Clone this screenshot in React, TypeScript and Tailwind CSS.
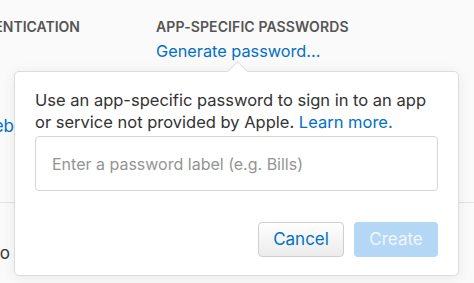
import React from "react";

export default function App() {
  return (
    <div
      className="relative w-[474px] h-[283px] overflow-hidden bg-[#fafafa]"
      style={{ fontFamily: "Inter, 'Noto Sans', sans-serif" }}
    >
      {/* background page */}
      <div className="flex flex-col">
        <div className="flex pt-[18px]">
          <div className="w-[156px]">
            <div className="w-[80px] flex justify-end whitespace-nowrap text-[14px] font-semibold text-[#555] leading-[18px]">
              TWO-FACTOR AUTHENTICATION
            </div>
          </div>
          <div className="flex flex-col">
            <div className="text-[14px] font-semibold text-[#555] leading-[18px] tracking-[0.1px]">
              APP-SPECIFIC PASSWORDS
            </div>
            <div className="mt-[4px] text-[16.3px] text-[#0070c9] leading-[22px]">
              Generate password...
            </div>
          </div>
        </div>
        <div className="mt-[53px] w-[14px] flex justify-end whitespace-nowrap text-[17px] text-[#0070c9] leading-[22px]">
          Web
        </div>
        <div className="mt-[65px] h-px bg-[#e3e3e3]" />
        <div className="mt-[39px] w-[10px] flex justify-end whitespace-nowrap text-[17px] text-[#333] leading-[22px]">
          Who
        </div>
      </div>

      {/* popover */}
      <div className="absolute left-[14px] top-[71px] w-[445px] h-[205px] bg-white border border-[#dcdcdc] rounded-[5px] shadow-[0_2px_14px_rgba(0,0,0,0.07)] px-[20px] pt-[17px]">
        {/* arrow */}
        <div className="absolute left-[215px] top-[-8px] w-[15px] h-[15px] bg-white border-l border-t border-[#dcdcdc] rotate-45" />
        <p className="relative text-[16.5px] leading-[22px] text-[#333]">
          Use an app-specific password to sign in to an app or service not provided by Apple.{" "}
          <span className="text-[#0070c9]">Learn more.</span>
        </p>
        <div className="mt-[3px] h-[55px] border border-[#d6d6d6] rounded-[4px] flex items-center px-[16px]">
          <span className="text-[16px] text-[#949494]">Enter a password label (e.g. Bills)</span>
        </div>
        <div className="mt-[31px] flex justify-end gap-[10px]">
          <div className="w-[86px] h-[35px] rounded-[4px] border border-[#cfcfcf] bg-gradient-to-b from-white to-[#ececec] flex items-center justify-center text-[17px] text-[#0070c9]">
            Cancel
          </div>
          <div className="w-[84px] h-[35px] rounded-[4px] bg-[#b3d7f5] flex items-center justify-center text-[17px] text-white/80">
            Create
          </div>
        </div>
      </div>
    </div>
  );
}
